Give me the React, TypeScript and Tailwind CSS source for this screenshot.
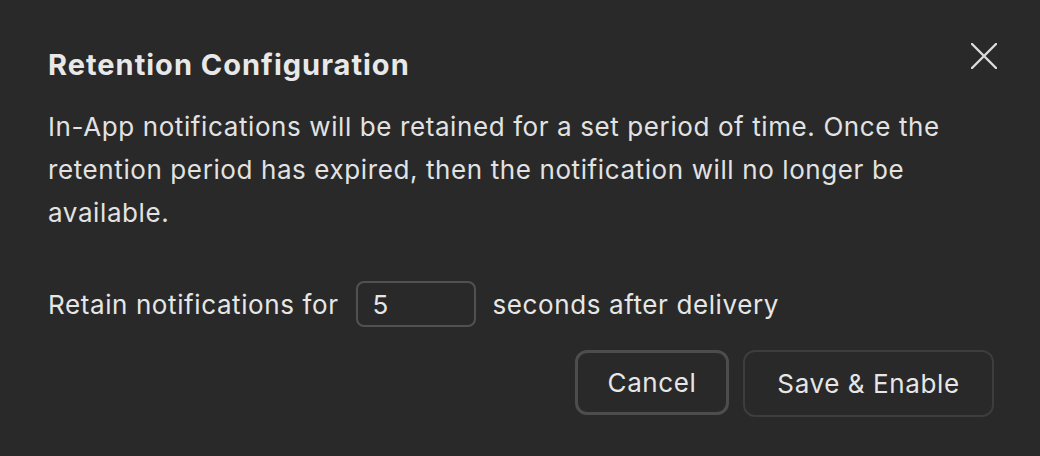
export default function App() {
  return (
    <div
      className="h-[456px] w-[1040px] bg-[#292929] text-[#e6e6e6]"
      style={{ fontFamily: "Inter, 'Noto Sans', sans-serif" }}
    >
      <div className="flex flex-col px-[48px] pt-[46px]">
        <div className="flex items-start justify-between">
          <h2 className="text-[29px] font-bold leading-[38px] tracking-[1px] text-[#e8e8e8]">
            Retention Configuration
          </h2>
          {/* close glyph */}
          <button className="-mr-[5px] -mt-[3px] text-[#dcdcdc]">
            <svg width="26" height="26" viewBox="0 0 26 26" fill="none">
              <path
                d="M1 1L25 25M25 1L1 25"
                stroke="currentColor"
                strokeWidth="2.4"
                strokeLinecap="round"
              />
            </svg>
          </button>
        </div>

        <p className="mt-[21px] max-w-[930px] text-[26px] leading-[43px] tracking-[0.6px] text-[#e2e2e2]">
          In-App notifications will be retained for a set period of time. Once the
          retention period has expired, then the notification will no longer be
          available.
        </p>

        <div className="mt-[47px] flex items-center gap-[17px] text-[26px] tracking-[0.6px]">
          <span>Retain notifications for</span>
          <input
            defaultValue="5"
            className="h-[46px] w-[120px] rounded-[8px] border-2 border-[#515151] bg-transparent px-[15px] text-[26px] text-[#e6e6e6] outline-none"
          />
          <span>seconds after delivery</span>
        </div>

        <div className="-mr-[2px] mt-[23px] flex justify-end gap-[14px] tracking-[0.6px]">
          <button className="h-[65px] w-[154px] rounded-[12px] border-[3px] border-[#4d4d4d] text-[26px] text-[#e6e6e6]">
            Cancel
          </button>
          <button className="h-[67px] w-[251px] rounded-[12px] border-2 border-[#3d3d3d] text-[26px] text-[#e6e6e6]">
            Save &amp; Enable
          </button>
        </div>
      </div>
    </div>
  );
}
